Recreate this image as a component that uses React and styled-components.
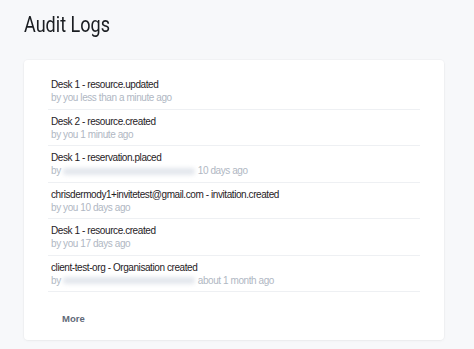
import React from 'react'
import styled, { createGlobalStyle } from 'styled-components'

const GlobalStyle = createGlobalStyle`
  html, body {
    margin: 0;
    padding: 0;
    background: #f7f8fa;
    font-family: "Liberation Sans", Arial, sans-serif;
  }
`

const Page = styled.div`
  padding: 12px 30px 0 24px;
  height: 349px;
  box-sizing: border-box;
  overflow: hidden;
`

const Title = styled.h1`
  display: inline-block;
  margin: 0 0 22px;
  font-family: Roboto, sans-serif;
  font-weight: 400;
  font-size: 22px;
  line-height: 26px;
  color: #1a1d21;
  transform: scaleX(0.82);
  transform-origin: left center;
`

const Card = styled.div`
  background: #fff;
  border-radius: 4px;
  box-shadow: 0 0 0 1px rgba(0, 0, 0, 0.02), 0 1px 3px rgba(0, 0, 0, 0.04);
  padding: 13px 24px 14px;
`

const List = styled.ul`
  list-style: none;
  margin: 0;
  padding: 0;
`

const Row = styled.li`
  padding: 5px 3px 4.5px;
  border-bottom: 1px solid #eef0f3;
`

const Event = styled.div`
  font-size: 10px;
  letter-spacing: -0.42px;
  line-height: 13px;
  color: #1f2226;
`

const Meta = styled.div`
  font-size: 10px;
  letter-spacing: -0.42px;
  line-height: 13px;
  color: #b0b7c3;
`

const Hidden = styled.span`
  display: inline-block;
  width: ${({ w }) => w}px;
  height: 7px;
  margin: 0 3px 0 2px;
  vertical-align: middle;
  background: #e3e7ed;
  filter: blur(2px);
  border-radius: 3px;
`

const More = styled.button`
  margin: 21px 0 0 14px;
  border: 0;
  background: none;
  padding: 0;
  font-family: "Liberation Sans", Arial, sans-serif;
  font-size: 9.5px;
  font-weight: 700;
  color: #5f6979;
  cursor: pointer;
`

const logs = [
  { event: 'Desk 1 - resource.updated', by: 'you', when: 'less than a minute ago' },
  { event: 'Desk 2 - resource.created', by: 'you', when: '1 minute ago' },
  { event: 'Desk 1 - reservation.placed', hidden: 132, when: '10 days ago' },
  { event: 'chrisdermody1+invitetest@gmail.com - invitation.created', by: 'you', when: '10 days ago' },
  { event: 'Desk 1 - resource.created', by: 'you', when: '17 days ago' },
  { event: 'client-test-org - Organisation created', hidden: 132, when: 'about 1 month ago' },
]

export default function App() {
  return (
    <>
      <GlobalStyle />
      <Page>
        <Title>Audit Logs</Title>
        <Card>
          <List>
            {logs.map((log, i) => (
              <Row key={i}>
                <Event>{log.event}</Event>
                <Meta>
                  by{log.hidden ? <Hidden w={log.hidden} /> : ` ${log.by} `}
                  {log.when}
                </Meta>
              </Row>
            ))}
          </List>
          <More>More</More>
        </Card>
      </Page>
    </>
  )
}
